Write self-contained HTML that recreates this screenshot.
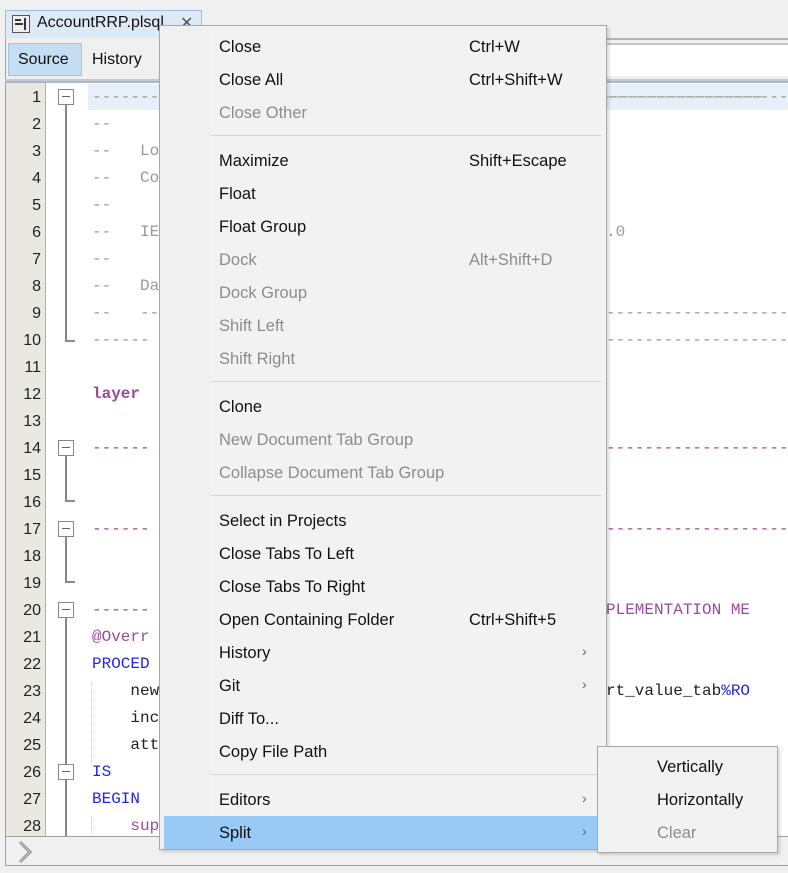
<!DOCTYPE html>
<html><head><meta charset="utf-8"><style>
*{margin:0;padding:0;box-sizing:border-box}
body{width:788px;height:873px;background:#f0f0f0;position:relative;overflow:hidden;font-family:"Liberation Sans",sans-serif;font-size:16px}
.a{position:absolute}
.code{position:absolute;font-family:"Liberation Mono",monospace;font-size:16px;white-space:pre;line-height:27px}
.c{color:#999}
.p{color:#9a4a9a}
.b{color:#2424e0}
.k{color:#222}
.ln{position:absolute;left:5px;width:36px;text-align:right;font-size:16px;color:#222;line-height:27px}
.fb{position:absolute;left:58px;width:16px;height:16px;border:1px solid #888;background:#fff}
.fb:after{content:"";position:absolute;left:3px;top:6px;width:8px;height:1px;background:#666}
.vl{position:absolute;left:65px;width:2px;background:#888}
.hl{position:absolute;left:65px;width:10px;height:2px;background:#888}
.mi{position:absolute;left:219px;color:#111;line-height:20px;font-size:16.5px}
.mi.d{color:#8c8c8c}
.sc{position:absolute;left:469px;color:#111;line-height:20px;font-size:16.5px}
.sc.d{color:#8c8c8c}
.sep{position:absolute;left:211px;width:390px;height:1px;background:#d4d4d4}
.arr{position:absolute;left:582px;color:#666;font-size:14px}
</style></head><body>
<!-- tab -->
<div class="a" style="left:5px;top:10px;width:197px;height:30px;background:#dde9f6;border:1px solid #9cbcd9;border-bottom:none"></div>
<div class="a" style="left:12px;top:15px;width:18px;height:18px;border:1px solid #555;background:#eee"></div>
<div class="a" style="left:15px;top:19px;width:6px;height:2px;background:#333"></div>
<div class="a" style="left:15px;top:23px;width:8px;height:2px;background:#333"></div>
<div class="a" style="left:24px;top:18px;width:2px;height:12px;background:#333"></div>
<div class="a" style="left:37px;top:14px;color:#111">AccountRRP.plsql</div>
<div class="a" style="left:180px;top:13px;color:#555;font-size:16px">✕</div>
<!-- toolbar -->
<div class="a" style="left:5px;top:38px;width:783px;height:45px;border-left:1px solid #a0a0a0;background:#f0f0f0"></div>
<div class="a" style="left:8px;top:43px;width:74px;height:33px;background:#c6def3;border:1px solid #9ec6ea"></div>
<div class="a" style="left:18px;top:51px;color:#111">Source</div>
<div class="a" style="left:92px;top:51px;color:#111">History</div>
<div class="a" style="left:600px;top:38px;width:188px;height:2px;background:#b4b4b4"></div>
<div class="a" style="left:600px;top:43px;width:188px;height:2px;background:#c4c4c4"></div>
<div class="a" style="left:600px;top:45px;width:188px;height:31px;background:#fff"></div>
<div class="a" style="left:5px;top:79px;width:783px;height:2px;background:#c8c8c8"></div>
<div class="a" style="left:5px;top:81px;width:783px;height:2px;background:#a4b8d0"></div>
<!-- editor -->
<div class="a" style="left:5px;top:83px;width:783px;height:753px;background:#fff;border-left:1px solid #a0a0a0"></div>
<div class="a" style="left:6px;top:83px;width:40px;height:753px;background:#e9e8e2;border-right:1px solid #b0b0b0"></div>
<div class="a" style="left:88px;top:84px;width:700px;height:26px;background:#e8eff8"></div>
<div id="nums"></div>
<!-- fold -->
<div class="fb" style="top:89px"></div><div class="vl" style="top:105px;height:236px"></div><div class="hl" style="top:340px"></div>
<div class="fb" style="top:440px"></div><div class="vl" style="top:456px;height:45px"></div><div class="hl" style="top:500px"></div>
<div class="fb" style="top:521px"></div><div class="vl" style="top:537px;height:45px"></div><div class="hl" style="top:581px"></div>
<div class="fb" style="top:602px"></div><div class="vl" style="top:618px;height:148px"></div>
<div class="fb" style="top:764px"></div><div class="vl" style="top:780px;height:56px"></div>
<div class="a" style="left:91px;top:683px;width:0;height:80px;border-left:1px dotted #ccc"></div>
<div class="a" style="left:91px;top:816px;width:0;height:20px;border-left:1px dotted #ccc"></div>
<div class="code" style="left:92px;top:84px"><span class="c">----------------------------------------------------------------------</span>
<span class="c">--</span>
<span class="c">--   Lo</span>
<span class="c">--   Co</span>
<span class="c">--</span>
<span class="c">--   IE</span>
<span class="c">--</span>
<span class="c">--   Da</span>
<span class="c">--   --</span>
<span class="c">------</span>

<span class="p" style="font-weight:bold">layer</span>

<span class="p">------</span>


<span class="p">------</span>


<span class="p">------</span>
<span class="p">@Overr</span>
<span class="b">PROCED</span>
<span class="k">    new</span>
<span class="k">    inc</span>
<span class="k">    att</span>
<span class="b">IS</span>
<span class="b">BEGIN</span>
<span class="p">    sup</span></div>
<div class="code" style="left:606px;top:84px"><span class="c">-------------------</span>




<span class="c">.0</span>


<span class="c">-------------------</span>
<span class="c">-------------------</span>



<span class="p">-------------------</span>


<span class="p">-------------------</span>


<span class="p">PLEMENTATION ME</span>


<span class="k">rt_value_tab</span><span class="b">%RO</span></div>
<!-- bottom bar -->
<div class="a" style="left:5px;top:836px;width:783px;height:30px;background:#f0f0f0;border:1px solid #a0a0a0;border-right:none"></div>
<svg class="a" style="left:16px;top:840px" width="20" height="24"><path d="M4 2 L14 12 L4 22" fill="none" stroke="#888" stroke-width="3"/><path d="M4 2 L14 12 L4 22" fill="none" stroke="#ccc" stroke-width="1"/></svg>
<!-- menu -->
<div class="a" style="left:159px;top:25px;width:448px;height:825px;background:#f2f2f2;border:1px solid #a8a8a8;box-shadow:2px 2px 3px rgba(0,0,0,.15)"></div>
<div class="a" style="left:160px;top:26px;width:50px;height:823px;background:#f0f0f0"></div>
<div class="mi" style="top:37px">Close</div><div class="sc" style="top:37px">Ctrl+W</div>
<div class="mi" style="top:70px">Close All</div><div class="sc" style="top:70px">Ctrl+Shift+W</div>
<div class="mi d" style="top:103px">Close Other</div>
<div class="sep" style="top:135px"></div>
<div class="mi" style="top:151px">Maximize</div><div class="sc" style="top:151px">Shift+Escape</div>
<div class="mi" style="top:184px">Float</div>
<div class="mi" style="top:217px">Float Group</div>
<div class="mi d" style="top:250px">Dock</div><div class="sc d" style="top:250px">Alt+Shift+D</div>
<div class="mi d" style="top:283px">Dock Group</div>
<div class="mi d" style="top:316px">Shift Left</div>
<div class="mi d" style="top:349px">Shift Right</div>
<div class="sep" style="top:381px"></div>
<div class="mi" style="top:397px">Clone</div>
<div class="mi d" style="top:430px">New Document Tab Group</div>
<div class="mi d" style="top:463px">Collapse Document Tab Group</div>
<div class="sep" style="top:495px"></div>
<div class="mi" style="top:511px">Select in Projects</div>
<div class="mi" style="top:544px">Close Tabs To Left</div>
<div class="mi" style="top:577px">Close Tabs To Right</div>
<div class="mi" style="top:610px">Open Containing Folder</div><div class="sc" style="top:610px">Ctrl+Shift+5</div>
<div class="mi" style="top:643px">History</div><div class="arr" style="top:643px">›</div>
<div class="mi" style="top:676px">Git</div><div class="arr" style="top:676px">›</div>
<div class="mi" style="top:709px">Diff To...</div>
<div class="mi" style="top:742px">Copy File Path</div>
<div class="sep" style="top:774px"></div>
<div class="mi" style="top:790px">Editors</div><div class="arr" style="top:790px">›</div>
<div class="a" style="left:164px;top:816px;width:438px;height:33px;background:#99c9f5"></div>
<div class="mi" style="top:823px">Split</div><div class="arr" style="top:823px">›</div>
<!-- submenu -->
<div class="a" style="left:597px;top:746px;width:181px;height:107px;background:#f2f2f2;border:1px solid #a8a8a8;box-shadow:2px 2px 3px rgba(0,0,0,.15)"></div>
<div class="a" style="left:657px;top:758px;color:#111;font-size:16.5px">Vertically</div>
<div class="a" style="left:657px;top:791px;color:#111;font-size:16.5px">Horizontally</div>
<div class="a" style="left:657px;top:824px;color:#8c8c8c;font-size:16.5px">Clear</div>
<script>
var h='';for(var i=1;i<=28;i++){h+='<div class="ln" style="top:'+(84+(i-1)*27)+'px">'+i+'</div>';}
document.getElementById('nums').innerHTML=h;
</script>
</body></html>
